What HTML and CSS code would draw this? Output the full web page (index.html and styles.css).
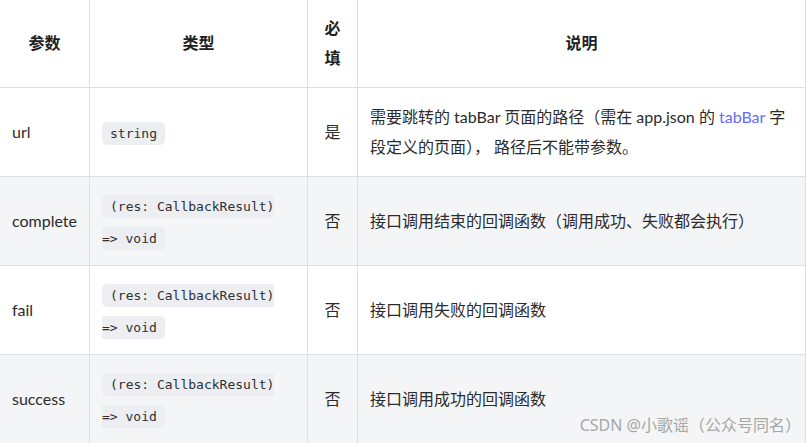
FILE: index.html
```html
<!DOCTYPE html>
<html lang="zh-CN">
<head>
<meta charset="utf-8">
<title>switchTab 参数</title>
<link rel="stylesheet" href="styles.css">
</head>
<body>
<div class="page">
  <table class="params">
    <colgroup>
      <col class="c-name">
      <col class="c-type">
      <col class="c-req">
      <col class="c-desc">
    </colgroup>
    <thead>
      <tr>
        <th>参数</th>
        <th>类型</th>
        <th>必填</th>
        <th>说明</th>
      </tr>
    </thead>
    <tbody>
      <tr>
        <td>url</td>
        <td class="type"><code>string</code></td>
        <td class="req">是</td>
        <td>需要跳转的 tabBar 页面的路径（需在 app.json 的 <a href="#">tabBar</a> 字段定义的页面）， 路径后不能带参数。</td>
      </tr>
      <tr class="alt">
        <td>complete</td>
        <td class="type"><code>(res: CallbackResult) =&gt; void</code></td>
        <td class="req">否</td>
        <td>接口调用结束的回调函数（调用成功、失败都会执行）</td>
      </tr>
      <tr>
        <td>fail</td>
        <td class="type"><code>(res: CallbackResult) =&gt; void</code></td>
        <td class="req">否</td>
        <td>接口调用失败的回调函数</td>
      </tr>
      <tr class="alt">
        <td>success</td>
        <td class="type"><code>(res: CallbackResult) =&gt; void</code></td>
        <td class="req">否</td>
        <td>接口调用成功的回调函数</td>
      </tr>
    </tbody>
  </table>
  <div class="watermark">CSDN @小歌谣（公众号同名）</div>
</div>
</body>
</html>
```

FILE: styles.css
```css
html, body {
  margin: 0;
  padding: 0;
  background: #ffffff;
}

body {
  font-family: "Lato", "Noto Sans CJK SC", sans-serif;
  font-size: 16px;
  color: #2b2b2b;
  overflow: hidden;
}

.page {
  position: relative;
  width: 807px;
  height: 443px;
  overflow: hidden;
}

.params {
  border-collapse: collapse;
  table-layout: fixed;
  width: 806px;
  margin: -2px 0 0 -1px;
}

.c-name { width: 90px; }
.c-type { width: 218px; }
.c-req { width: 50px; }
.c-desc { width: 448px; }

.params th,
.params td {
  border: 1px solid #dcdfe3;
  padding: 14px 12px;
  line-height: 30px;
  height: 60px;
  vertical-align: middle;
}

.params th {
  font-weight: 700;
  text-align: center;
  color: #1f1f1f;
}

.params td {
  text-align: left;
}

.params td.req {
  text-align: center;
}

.params td.type {
  line-height: 32px;
  padding: 12px 12px;
}

.params tr.alt td {
  background: #f4f5f7;
}

.params a {
  color: #646cff;
  text-decoration: none;
}

code {
  font-family: "DejaVu Sans Mono", "Liberation Mono", monospace;
  font-size: 13px;
  line-height: 1;
  color: #2f3035;
  background: #eceef1;
  border-radius: 5px;
  padding: 4px 8px;
}

.watermark {
  position: absolute;
  right: 6px;
  bottom: 7px;
  font-size: 16px;
  line-height: 22px;
  color: #a6a6a6;
  font-family: "Noto Sans", "Noto Sans CJK SC", sans-serif;
}
```
